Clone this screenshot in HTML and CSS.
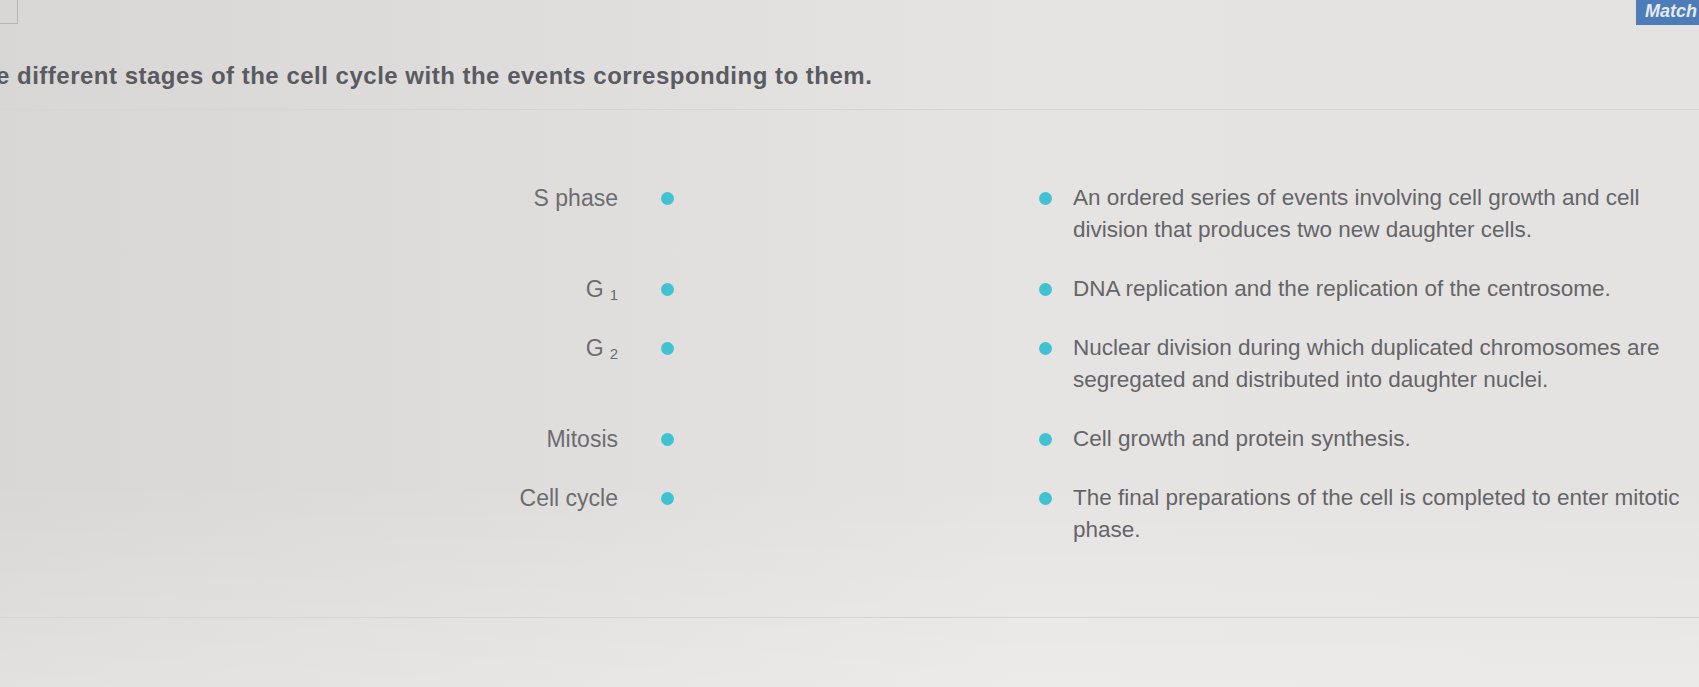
FILE: index.html
```html
<!DOCTYPE html>
<html>
<head>
<meta charset="utf-8">
<link rel="stylesheet" href="styles.css">
</head>
<body>
<div class="page">
  <div class="topbar">
    <div class="corner-box"></div>
    <div class="match-btn">Match</div>
  </div>
  <h1 class="title">e different stages of the cell cycle with the events corresponding to them.</h1>
  <div class="divider"></div>
  <div class="matching">
    <div class="row">
      <div class="label">S phase</div>
      <span class="dot dot-left"></span>
      <span class="dot dot-right"></span>
      <div class="desc">An ordered series of events involving cell growth and cell division that produces two new daughter cells.</div>
    </div>
    <div class="row">
      <div class="label">G<sub>1</sub></div>
      <span class="dot dot-left"></span>
      <span class="dot dot-right"></span>
      <div class="desc">DNA replication and the replication of the centrosome.</div>
    </div>
    <div class="row">
      <div class="label">G<sub>2</sub></div>
      <span class="dot dot-left"></span>
      <span class="dot dot-right"></span>
      <div class="desc">Nuclear division during which duplicated chromosomes are segregated and distributed into daughter nuclei.</div>
    </div>
    <div class="row">
      <div class="label">Mitosis</div>
      <span class="dot dot-left"></span>
      <span class="dot dot-right"></span>
      <div class="desc">Cell growth and protein synthesis.</div>
    </div>
    <div class="row">
      <div class="label">Cell cycle</div>
      <span class="dot dot-left"></span>
      <span class="dot dot-right"></span>
      <div class="desc">The final preparations of the cell is completed to enter mitotic phase.</div>
    </div>
  </div>
  <div class="divider bottom-divider"></div>
</div>
</body>
</html>
```

FILE: styles.css
```css
html, body {
  margin: 0;
  padding: 0;
}
body {
  width: 1699px;
  height: 687px;
  overflow: hidden;
  font-family: "Liberation Sans", Arial, sans-serif;
  background: linear-gradient(90deg, #d9d7d6 0%, #dfdddc 30%, #e6e4e3 60%, #e5e3e2 100%);
}
.page {
  height: 687px;
  display: flex;
  flex-direction: column;
  background: linear-gradient(180deg, rgba(255,255,255,0) 0%, rgba(255,255,255,0) 70%, rgba(255,255,255,0.25) 100%);
}
.topbar {
  display: flex;
  justify-content: space-between;
  align-items: flex-start;
  height: 52px;
}
.corner-box {
  width: 20px;
  height: 24px;
  margin-left: -2px;
  border: 1px solid #b6b5b5;
  border-top: none;
  border-left: none;
  box-sizing: border-box;
}
.match-btn {
  width: 63px;
  height: 25px;
  background: #4d7cb9;
  color: #e4ebf4;
  font-style: italic;
  font-weight: bold;
  font-size: 18px;
  line-height: 23px;
  padding-left: 9px;
  box-sizing: border-box;
  white-space: nowrap;
  overflow: hidden;
}
.title {
  margin: 0 0 0 -4px;
  font-size: 24px;
  font-weight: bold;
  color: #585b61;
  line-height: 48px;
  letter-spacing: 0.5px;
  white-space: nowrap;
}
.divider {
  height: 1px;
  background: #d6d5d4;
  margin-top: 9px;
}
.matching {
  display: flex;
  flex-direction: column;
  gap: 27px;
  padding-top: 72px;
  font-size: 22.5px;
  line-height: 32px;
}
.row {
  display: flex;
  align-items: flex-start;
}
.label {
  width: 618px;
  text-align: right;
  color: #6c6c6f;
  flex-shrink: 0;
  font-size: 23px;
}
.label sub {
  font-size: 15px;
  vertical-align: -3px;
  margin-left: 6px;
  line-height: 0;
}
.dot {
  width: 13px;
  height: 13px;
  border-radius: 50%;
  background: #3fc3d3;
  margin-top: 10px;
  flex-shrink: 0;
}
.dot-left {
  margin-left: 43px;
}
.dot-right {
  margin-left: 365px;
}
.desc {
  margin-left: 21px;
  width: 630px;
  color: #646568;
}
.bottom-divider {
  margin-top: auto;
  margin-bottom: 69px;
}
```
